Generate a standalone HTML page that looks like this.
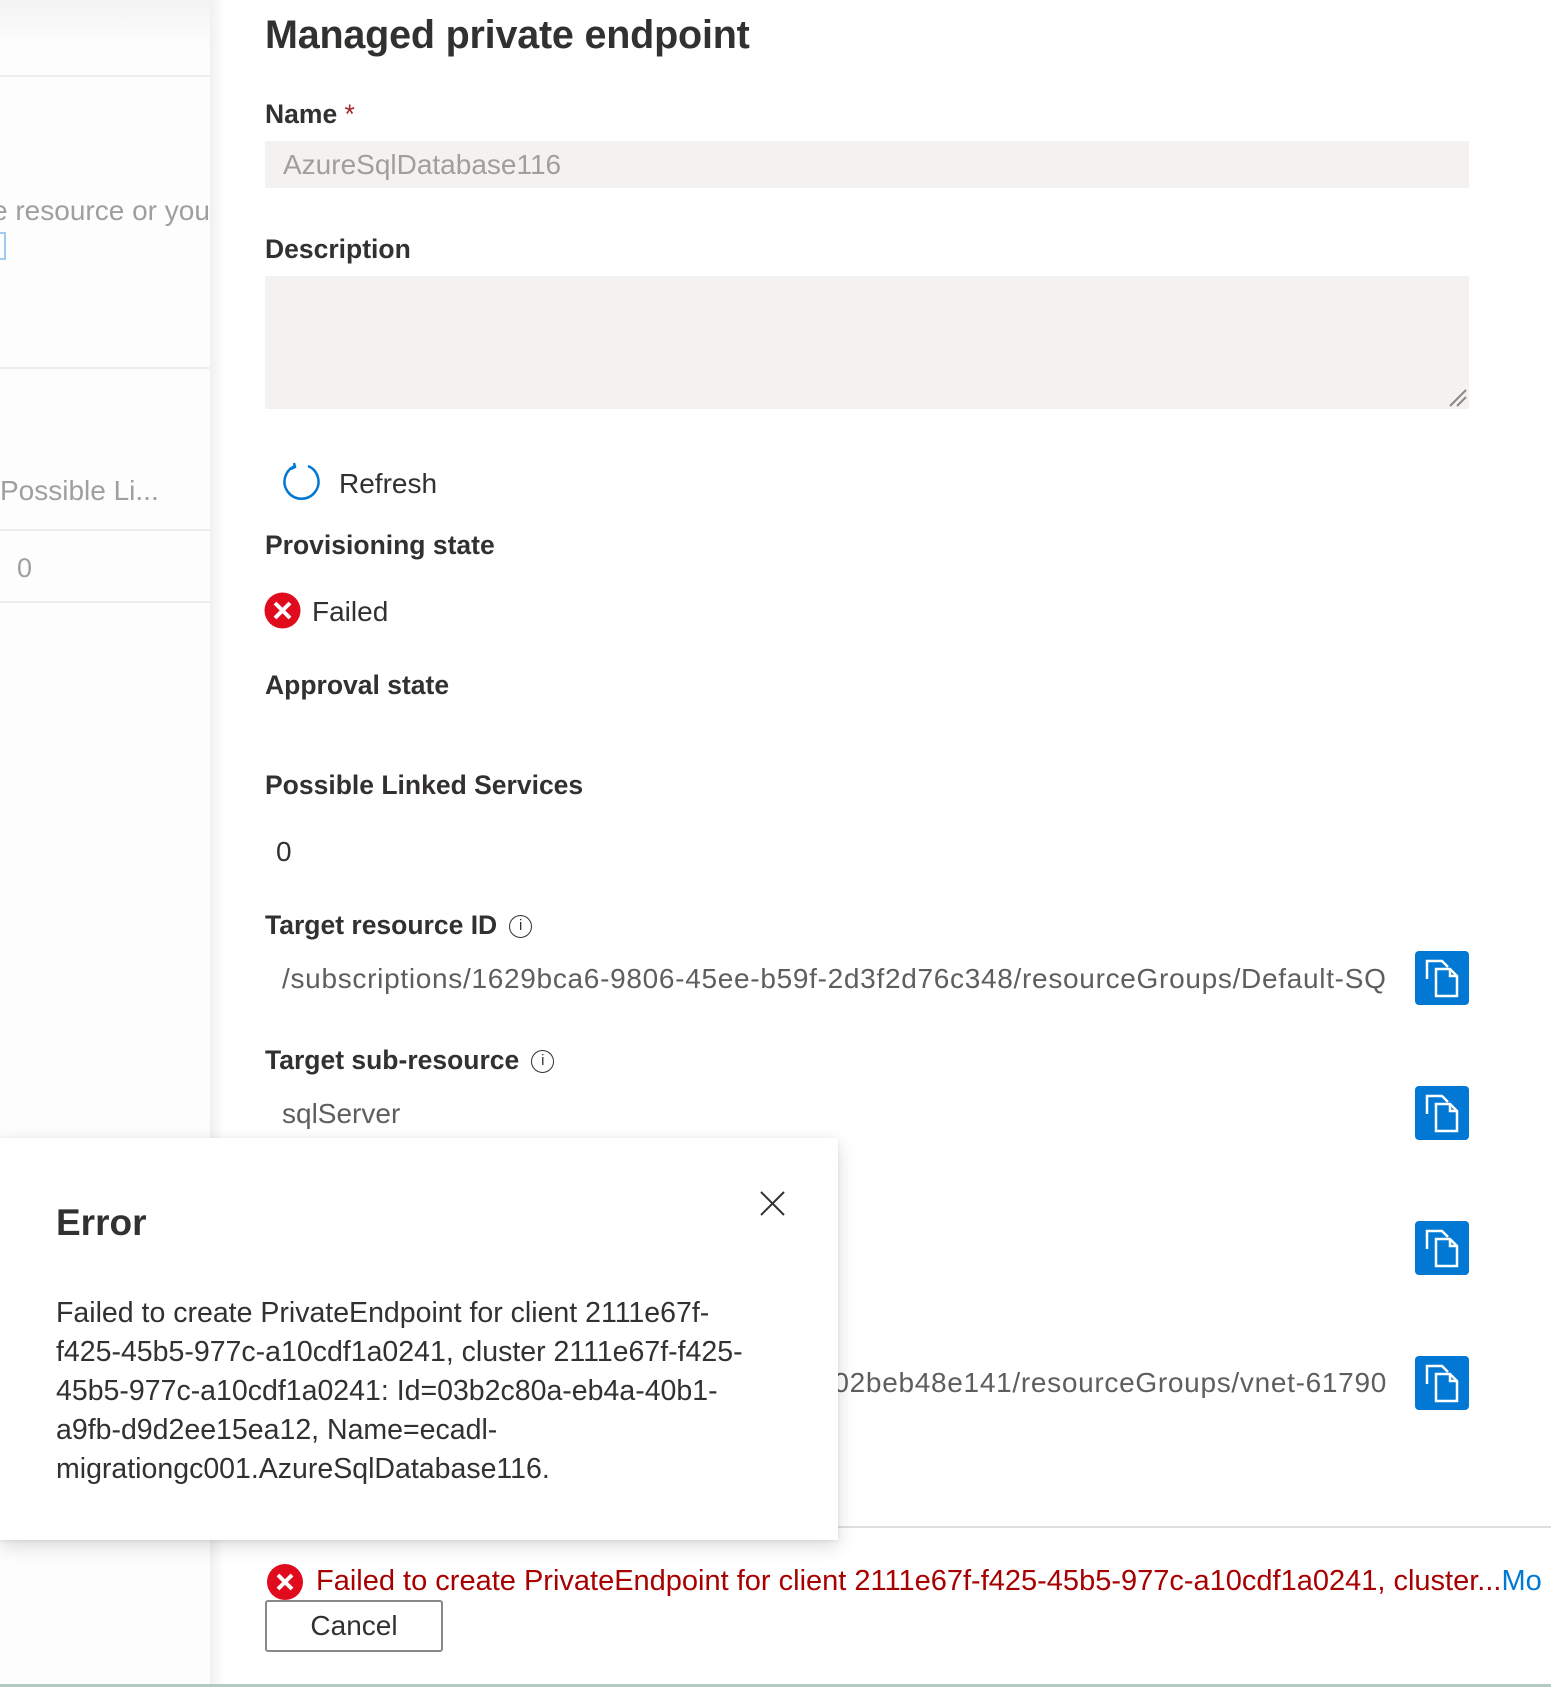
<!DOCTYPE html>
<html><head><meta charset="utf-8"><style>
*{margin:0;padding:0;box-sizing:border-box}
body{width:1551px;height:1687px;position:relative;overflow:hidden;background:#fff;font-family:"Liberation Sans",Arial,sans-serif;color:#323130}
.a{position:absolute;white-space:nowrap}
.left{position:absolute;left:0;top:0;width:210px;height:1687px;background:#fdfdfd;overflow:hidden}
.hl{position:absolute;left:0;width:210px;height:2px;background:#efeeed}
.shadow{position:absolute;left:210px;top:0;width:14px;height:1687px;background:linear-gradient(to right,rgba(0,0,0,.06),rgba(0,0,0,0))}
.lbl{font-size:26.5px;font-weight:bold;color:#323130;line-height:30px}
.val{font-size:28px;color:#605e5c;line-height:32px}
.copy{position:absolute;left:1415px;width:54px;height:54px;background:#0078d4;border-radius:4px}
.info{display:inline-block;width:23px;height:23px;border:1.5px solid #323130;border-radius:50%;font-size:15px;text-align:center;line-height:20px;font-weight:normal;vertical-align:4px;margin-left:12px}
</style></head><body>
<div class="left">
  <div style="position:absolute;left:0;top:0;width:210px;height:45px;background:linear-gradient(#f3f3f3,#fdfdfd)"></div>
  <div class="hl" style="top:75px"></div>
  <div class="a" style="left:-8px;top:195px;font-size:28px;color:#a19f9d">e resource or you</div>
  <div class="a" style="left:0;top:232px;width:6px;height:28px;border:2px solid #9fcbf0;border-left:none"></div>
  <div class="hl" style="top:367px"></div>
  <div class="a" style="left:0;top:475px;font-size:28px;color:#a19f9d">Possible Li...</div>
  <div class="hl" style="top:529px"></div>
  <div class="a" style="left:17px;top:553px;font-size:27px;color:#a19f9d">0</div>
  <div class="hl" style="top:601px"></div>
</div>
<div class="shadow"></div>

<div class="a" style="left:265px;top:13px;font-size:39.5px;font-weight:bold;color:#323130;letter-spacing:-0.2px">Managed private endpoint</div>
<div class="a lbl" style="left:265px;top:99px">Name <span style="color:#a4262c;font-weight:normal">*</span></div>
<div class="a" style="left:265px;top:141px;width:1204px;height:47px;background:#f3f2f1;border-radius:2px"></div>
<div class="a" style="left:283px;top:149px;font-size:28px;color:#a19f9d">AzureSqlDatabase116</div>
<div class="a lbl" style="left:265px;top:234px">Description</div>
<div class="a" style="left:265px;top:276px;width:1204px;height:133px;background:#f3f2f1;border-radius:2px"></div>
<svg class="a" style="left:1448px;top:388px" width="20" height="20"><path d="M2 18L18 2M9 18L18 9" stroke="#8a8886" stroke-width="2"/></svg>

<svg class="a" style="left:282px;top:462px" width="40" height="40"><path d="M13 4 A17 17 0 1 0 26 4" fill="none" stroke="#0078d4" stroke-width="2.5"/><path d="M12 1 L13 5 L9 7" fill="none" stroke="#0078d4" stroke-width="2.5"/></svg>
<div class="a" style="left:339px;top:468px;font-size:28px;color:#323130">Refresh</div>
<div class="a lbl" style="left:265px;top:530px">Provisioning state</div>
<svg class="a" style="left:264px;top:592px" width="37" height="37"><circle cx="18.5" cy="18.5" r="18" fill="#e00b1c"/><path d="M11 11L26 26M26 11L11 26" stroke="#fff" stroke-width="4"/></svg>
<div class="a" style="left:312px;top:596px;font-size:28px;color:#323130">Failed</div>
<div class="a lbl" style="left:265px;top:670px">Approval state</div>
<div class="a lbl" style="left:265px;top:770px">Possible Linked Services</div>
<div class="a" style="left:276px;top:836px;font-size:28px;color:#323130">0</div>
<div class="a lbl" style="left:265px;top:910px">Target resource ID<span class="info">i</span></div>
<div class="a val" style="left:282px;top:963px;width:1105px;overflow:hidden;letter-spacing:0.7px">/subscriptions/1629bca6-9806-45ee-b59f-2d3f2d76c348/resourceGroups/Default-SQL-WestEurope</div>
<div class="a lbl" style="left:265px;top:1045px">Target sub-resource<span class="info">i</span></div>
<div class="a val" style="left:282px;top:1098px">sqlServer</div>
<div class="a val" style="left:282px;top:1367px;width:1105px;overflow:hidden;display:flex;justify-content:flex-end;letter-spacing:0.7px">/subscriptions/a9d1c3e5-1111-4e7a-9c2b-02beb48e141/resourceGroups/vnet-61790</div>

<div class="copy" style="top:951px"></div>
<div class="copy" style="top:1086px"></div>
<div class="copy" style="top:1221px"></div>
<div class="copy" style="top:1356px"></div>
<svg class="a" style="left:1415px;top:951px" width="54" height="460">
<defs><g id="ci" fill="none" stroke="#fff" stroke-width="2.5"><path d="M12 28V10h15l6 6"/><path d="M21 45V18h14l7 7v20z"/><path d="M35 18v7h7"/></g></defs>
<use href="#ci" y="0"/><use href="#ci" y="135"/><use href="#ci" y="270"/><use href="#ci" y="405"/>
</svg>

<div class="a" style="left:838px;top:1526px;width:713px;height:2px;background:#e1dfdd"></div>
<svg class="a" style="left:267px;top:1564px" width="36" height="36"><circle cx="18" cy="18" r="18" fill="#e00b1c"/><path d="M11 11L25 25M25 11L11 25" stroke="#fff" stroke-width="4"/></svg>
<div class="a" style="left:316px;top:1565px;font-size:29px;color:#a80000">Failed to create PrivateEndpoint for client 2111e67f-f425-45b5-977c-a10cdf1a0241, cluster...<span style="color:#0078d4">Mo</span></div>
<div class="a" style="left:265px;top:1600px;width:178px;height:52px;border:2px solid #8a8886;border-radius:3px;font-size:28px;text-align:center;line-height:47px;color:#323130">Cancel</div>
<div class="a" style="left:0;top:1684px;width:1551px;height:3px;background:#b4c8c4"></div>

<div class="a" style="left:0;top:1138px;width:838px;height:402px;background:#fff;box-shadow:0 6px 18px rgba(0,0,0,.14),0 1px 4px rgba(0,0,0,.08)">
  <div class="a" style="left:56px;top:64px;font-size:37px;font-weight:bold;color:#323130">Error</div>
  <svg class="a" style="left:760px;top:53px" width="25" height="25"><path d="M1 1L24 24M24 1L1 24" stroke="#323130" stroke-width="2"/></svg>
  <div class="a" style="left:56px;top:156px;font-size:28.5px;line-height:39px;color:#323130;white-space:normal;width:780px">Failed to create PrivateEndpoint for client 2111e67f-<br>f425-45b5-977c-a10cdf1a0241, cluster 2111e67f-f425-<br>45b5-977c-a10cdf1a0241: Id=03b2c80a-eb4a-40b1-<br>a9fb-d9d2ee15ea12, Name=ecadl-<br>migrationgc001.AzureSqlDatabase116.</div>
</div>
</body></html>
